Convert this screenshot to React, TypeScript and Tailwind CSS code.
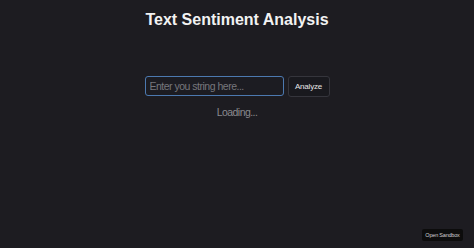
export default function App() {
  return (
    <div className="relative h-[248px] w-full overflow-hidden bg-[#1d1c21] font-['Liberation_Sans',Arial,sans-serif] text-white">
      {/* Header */}
      <h1 className="pt-[10px] text-center text-[16px] font-bold leading-[20px] text-[#f2f2f2]">
        Text Sentiment Analysis
      </h1>

      {/* Form */}
      <div className="mt-[46px] flex justify-center gap-[4px]">
        <input
          type="text"
          placeholder="Enter you string here..."
          className="h-[20px] w-[139px] rounded-[3px] border border-[#4c79b0] bg-[#1c1c22] px-[4px] text-[10.5px] tracking-[-0.5px] text-white outline-none placeholder:text-[#77777d]"
        />
        <button className="h-[21px] w-[42px] rounded-[3px] border border-[#35353c] bg-[#19191e] text-[8px] tracking-[-0.2px] text-[#e6e6e6]">
          Analyze
        </button>
      </div>

      <p className="mt-[8px] text-center text-[10.5px] leading-[14px] tracking-[-0.55px] text-[#8a8a8f]">
        Loading...
      </p>

      {/* Sandbox badge */}
      <div className="absolute bottom-[7px] right-[11px] w-[41px] rounded-[2px] bg-[#0c0c0c] py-[2px] text-center text-[5.5px] leading-[8px] tracking-[-0.2px] text-[#d0d0d0]">
        Open Sandbox
      </div>
    </div>
  );
}
